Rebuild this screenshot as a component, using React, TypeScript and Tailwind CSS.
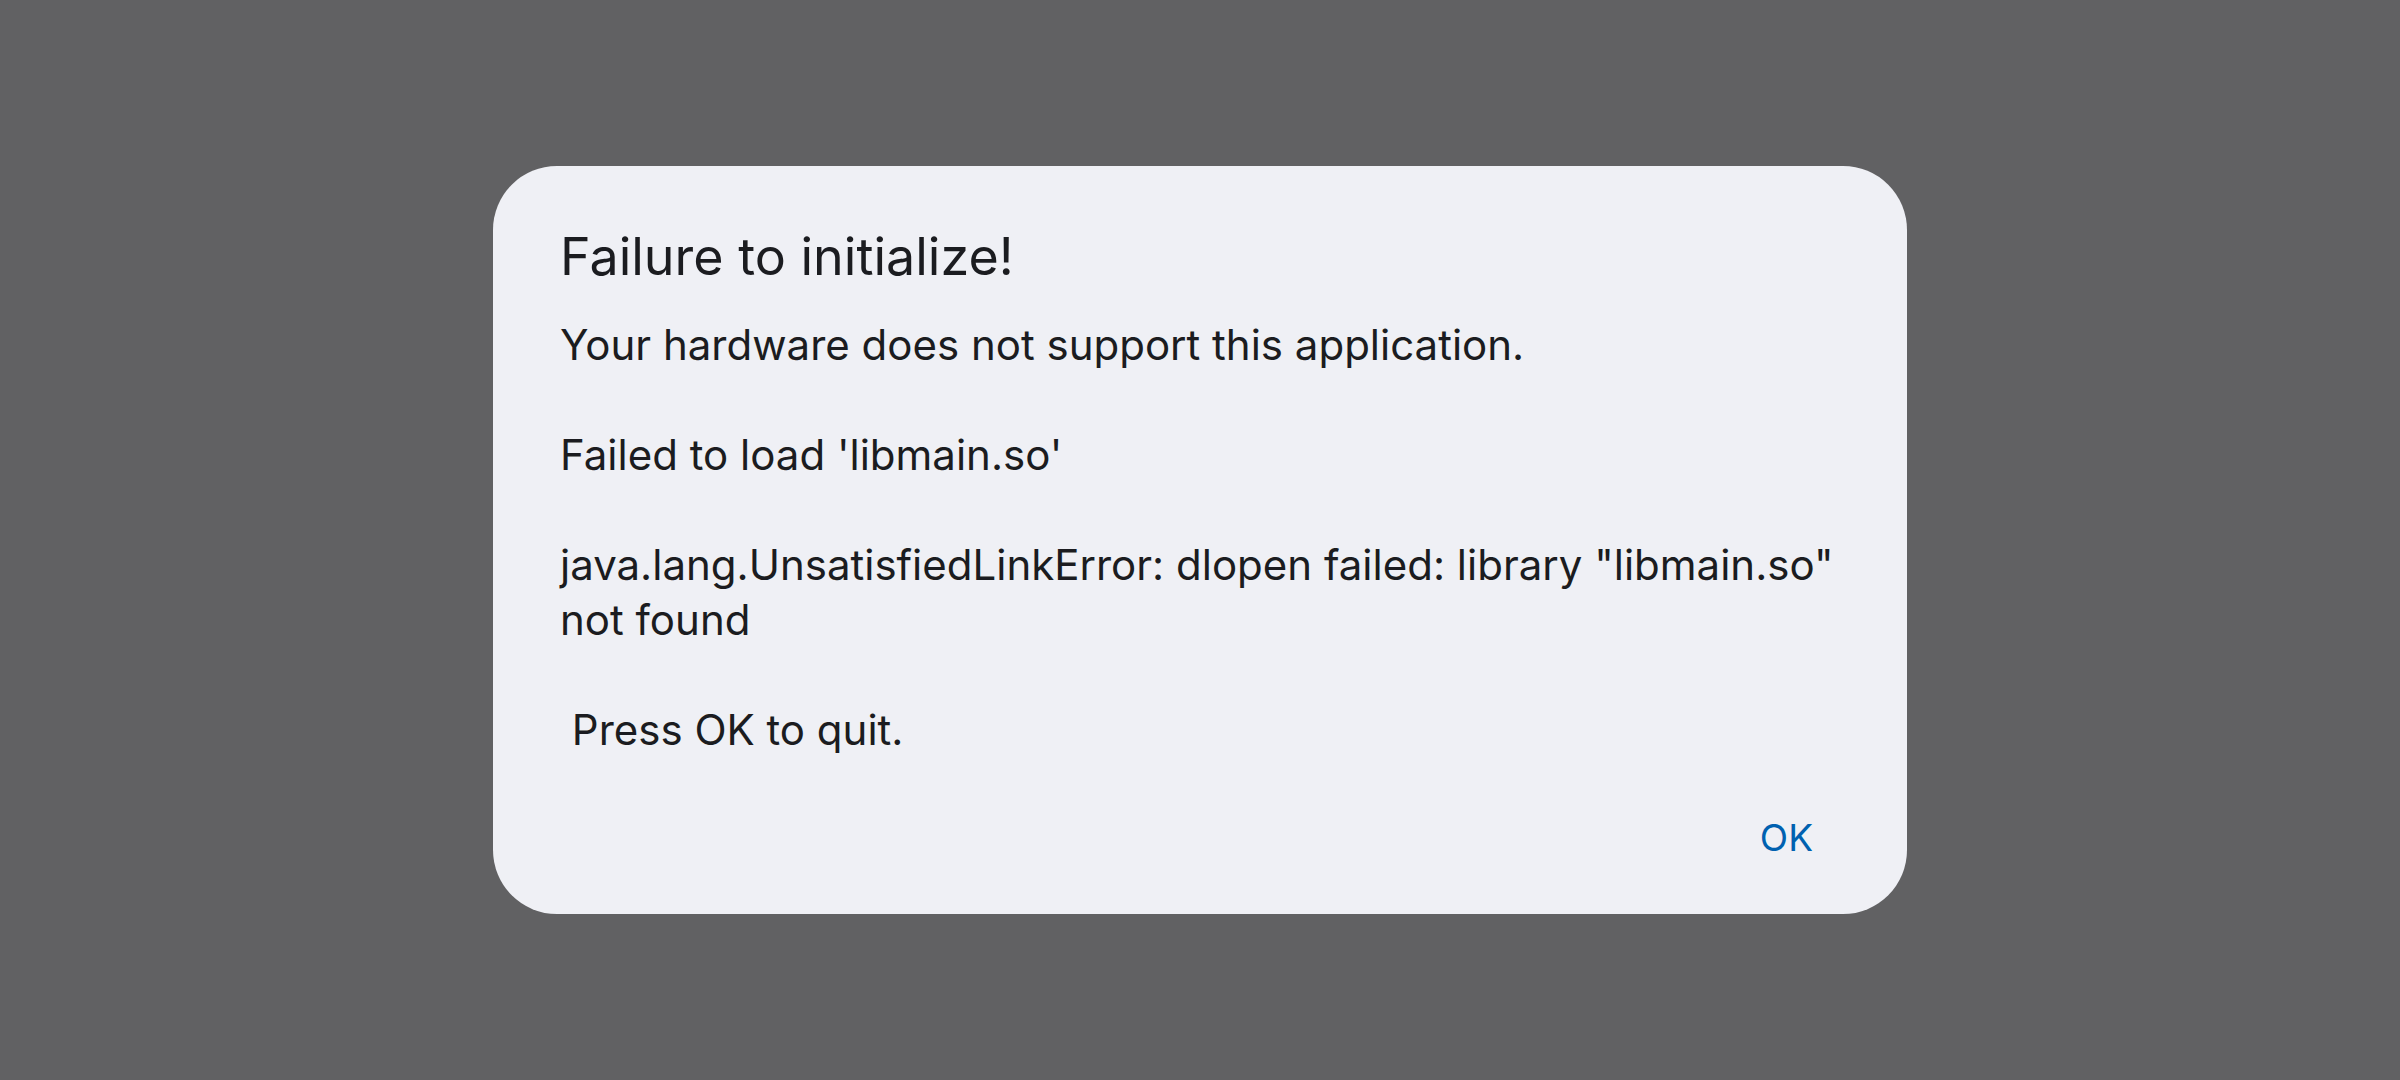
import React from 'react';

const message =
  "Your hardware does not support this application.\n\nFailed to load 'libmain.so'\n\njava.lang.UnsatisfiedLinkError: dlopen failed: library \"libmain.so\" not found\n\n Press OK to quit.";

const App: React.FC = () => {
  return (
    <div className="w-full h-screen bg-[#616163] flex items-center justify-center font-['Inter',sans-serif]">
      <div className="w-[1414px] rounded-[64px] bg-[#eff0f5] pt-[59px] pb-[40px] pl-[67px] pr-[67px] flex flex-col">
        <h1 className="text-[52px] leading-[64px] text-[#1b1c20] font-normal">Failure to initialize!</h1>
        <p className="mt-[28px] text-[42px] leading-[55px] text-[#1b1c20] whitespace-pre-wrap">{message}</p>
        <div className="mt-[44px] flex justify-end">
          <button className="px-[27px] py-[14px] text-[37px] leading-[45px] text-[#0061b0]">OK</button>
        </div>
      </div>
    </div>
  );
};

export default App;
